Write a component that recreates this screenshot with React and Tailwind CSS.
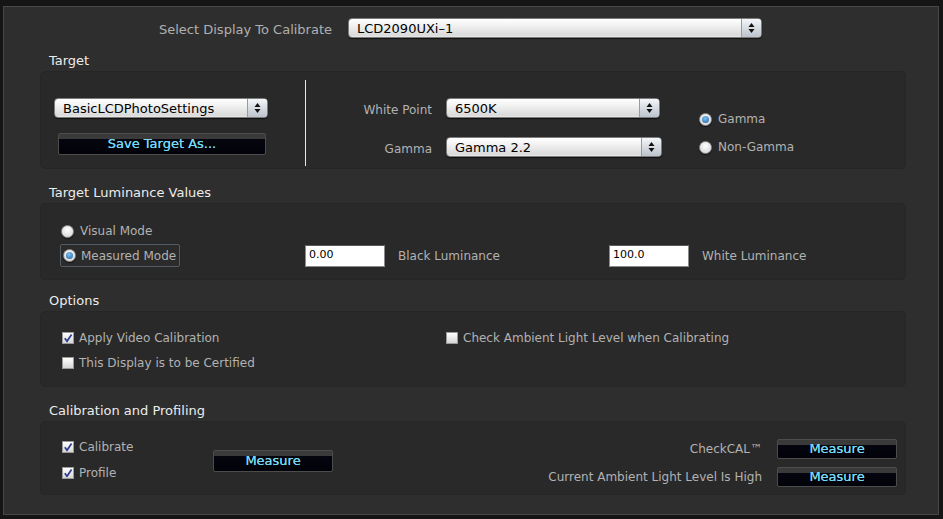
import React from 'react';

// 显示器校准面板
const font = "[font-family:'DejaVu_Sans','Verdana',sans-serif]";

const Arrows = () => (
  <svg width="7" height="12" viewBox="0 0 7 12">
    <polygon points="0.5,5 3.5,1 6.5,5" fill="#111" />
    <polygon points="0.5,7 3.5,11 6.5,7" fill="#111" />
  </svg>
);

const Select = ({ value, width }) => (
  <div
    className={`flex h-[20px] ${width} rounded-[4px] border border-[#7c7c7c] bg-[linear-gradient(to_bottom,#ffffff,#eeeeee_45%,#dadada_90%,#e9e9e9)] shadow-[0_1px_1px_rgba(0,0,0,0.6)] overflow-hidden`}
  >
    <div className="flex-1 pl-[8px] pt-[1px] text-[13px] leading-[18px] text-black whitespace-nowrap">{value}</div>
    <div className="w-[20px] flex items-center justify-center border-l border-[#9a9a9a] bg-[linear-gradient(to_bottom,#f4f6f9,#d2d7de_60%,#bcc3cc)]">
      <Arrows />
    </div>
  </div>
);

const BlackButton = ({ children, className = '' }) => (
  <div
    className={`flex items-center justify-center rounded-[2px] border border-[#4c4c4c] bg-[linear-gradient(to_bottom,#3a3a3a_0,#3a3a3a_5px,#05050f_5px,#02020a)] text-[13px] leading-[16px] text-[#74daf7] [text-shadow:0_0_0.6px_#74daf7] ${className}`}
  >
    <span>{children}</span>
  </div>
);

const Radio = ({ checked }) => (
  <span className="inline-flex w-[13px] h-[13px] shrink-0 items-center justify-center rounded-full border border-[#8d8d8d] bg-[radial-gradient(circle_at_50%_35%,#ffffff,#cfcfcf)] shadow-[0_1px_1px_rgba(0,0,0,0.6)]">
    {checked && (
      <span className="w-[7px] h-[7px] rounded-full bg-[radial-gradient(circle_at_45%_35%,#7fc3f5,#1f5f9f)]" />
    )}
  </span>
);

const Checkbox = ({ checked }) => (
  <span className="inline-flex w-[12px] h-[12px] shrink-0 items-center justify-center border border-[#9a9a9a] bg-[linear-gradient(to_bottom,#ffffff,#d6d6d6)]">
    {checked && (
      <svg width="10" height="10" viewBox="0 0 10 10">
        <path d="M1.8 5.2 L4 8.2 L8.6 1.4" fill="none" stroke="#2a3c8c" strokeWidth="1.7" />
      </svg>
    )}
  </span>
);

const Label = ({ children, className = '' }) => (
  <span className={`text-[12px] leading-[16px] text-[#b2b2b2] whitespace-nowrap ${className}`}>{children}</span>
);

const CheckRow = ({ checked, children }) => (
  <div className="flex items-center gap-[5px] h-[16px]">
    <Checkbox checked={checked} />
    <Label>{children}</Label>
  </div>
);

const Section = ({ title, headerClass, boxClass, children }) => (
  <div className="ml-[36px] w-[866px]">
    <div className={`pl-[9px] pb-[2px] text-[13px] leading-[16px] text-[#ececec] ${headerClass}`}>{title}</div>
    <div className={`rounded-[5px] border border-[#262626] bg-[#292929] ${boxClass}`}>{children}</div>
  </div>
);

const Input = ({ value }) => (
  <div className="w-[80px] h-[22px] bg-white border border-[#8a8a8a] border-t-[#5a5a5a] pl-[3px] text-[11px] leading-[18px] text-black">
    {value}
  </div>
);

const App = () => {
  return (
    <div className={`w-[943px] h-[519px] bg-[#151515] pl-[3px] pt-[6px] ${font}`}>
      <div className="w-[936px] h-[509px] border border-[#474747] bg-[#2e2e2e]">
        {/* 选择显示器 */}
        <div className="flex items-center mt-[11px] pl-[155px]">
          <span className="w-[177px] pt-[3px] text-[13px] leading-[16px] text-[#b0b0b0] whitespace-nowrap">Select Display To Calibrate</span>
          <div className="ml-[12px]">
            <Select value="LCD2090UXi–1" width="w-[414px]" />
          </div>
        </div>

        {/* 目标 */}
        <Section title="Target" headerClass="pt-[15px]" boxClass="h-[98px] flex pl-[13px]">
          <div className="flex flex-col pt-[26px] w-[214px]">
            <Select value="BasicLCDPhotoSettings" width="w-[214px]" />
            <BlackButton className="mt-[15px] ml-[4px] w-[208px] h-[22px]">Save Target As...</BlackButton>
          </div>
          <div className="ml-[37px] mt-[8px] w-[1px] h-[86px] bg-[#e8e8e8]" />
          <div className="flex flex-col pt-[26px] gap-[19px]">
            <div className="flex items-center">
              <Label className="w-[126px] text-right pt-[3px]">White Point</Label>
              <div className="ml-[14px]">
                <Select value="6500K" width="w-[214px]" />
              </div>
            </div>
            <div className="flex items-center">
              <Label className="w-[126px] text-right pt-[3px]">Gamma</Label>
              <div className="ml-[14px]">
                <Select value="Gamma 2.2" width="w-[216px]" />
              </div>
            </div>
          </div>
          <div className="ml-[37px] flex flex-col pt-[39px] gap-[12px]">
            <div className="flex items-center gap-[6px] h-[16px]">
              <Radio checked />
              <Label>Gamma</Label>
            </div>
            <div className="flex items-center gap-[6px] h-[16px]">
              <Radio />
              <Label>Non-Gamma</Label>
            </div>
          </div>
        </Section>

        {/* 目标亮度 */}
        <Section title="Target Luminance Values" headerClass="pt-[16px]" boxClass="h-[77px] pl-[20px] pt-[19px]">
          <div className="flex items-center gap-[6px] h-[16px]">
            <Radio />
            <Label>Visual Mode</Label>
          </div>
          <div className="flex items-center mt-[5px]">
            <div className="ml-[-1px] w-[120px] h-[23px] flex items-center gap-[5px] pl-[2px] rounded-[2px] border border-[#545b63] bg-[#2b2b2b]">
              <Radio checked />
              <Label>Measured Mode</Label>
            </div>
            <div className="ml-[125px]">
              <Input value="0.00" />
            </div>
            <Label className="ml-[13px] w-[211px]">Black Luminance</Label>
            <Input value="100.0" />
            <Label className="ml-[13px]">White Luminance</Label>
          </div>
        </Section>

        {/* 选项 */}
        <Section title="Options" headerClass="pt-[13px]" boxClass="h-[76px] pl-[21px] pt-[18px] flex">
          <div className="w-[384px] flex flex-col gap-[9px]">
            <CheckRow checked>Apply Video Calibration</CheckRow>
            <CheckRow>This Display is to be Certified</CheckRow>
          </div>
          <div className="flex flex-col">
            <CheckRow>Check Ambient Light Level when Calibrating</CheckRow>
          </div>
        </Section>

        {/* 校准与特性化 */}
        <Section title="Calibration and Profiling" headerClass="pt-[16px]" boxClass="h-[74px] pl-[21px] flex">
          <div className="w-[151px] flex flex-col pt-[17px] gap-[10px]">
            <CheckRow checked>Calibrate</CheckRow>
            <CheckRow checked>Profile</CheckRow>
          </div>
          <BlackButton className="mt-[28px] w-[120px] h-[22px] self-start">Measure</BlackButton>
          <div className="ml-auto pr-[8px] pt-[17px] flex flex-col gap-[8px]">
            <div className="flex items-center justify-end gap-[15px]">
              <Label>CheckCAL™</Label>
              <BlackButton className="w-[120px] h-[20px]">Measure</BlackButton>
            </div>
            <div className="flex items-center justify-end gap-[15px]">
              <Label>Current Ambient Light Level Is High</Label>
              <BlackButton className="w-[120px] h-[20px]">Measure</BlackButton>
            </div>
          </div>
        </Section>
      </div>
    </div>
  );
};

export default App;
